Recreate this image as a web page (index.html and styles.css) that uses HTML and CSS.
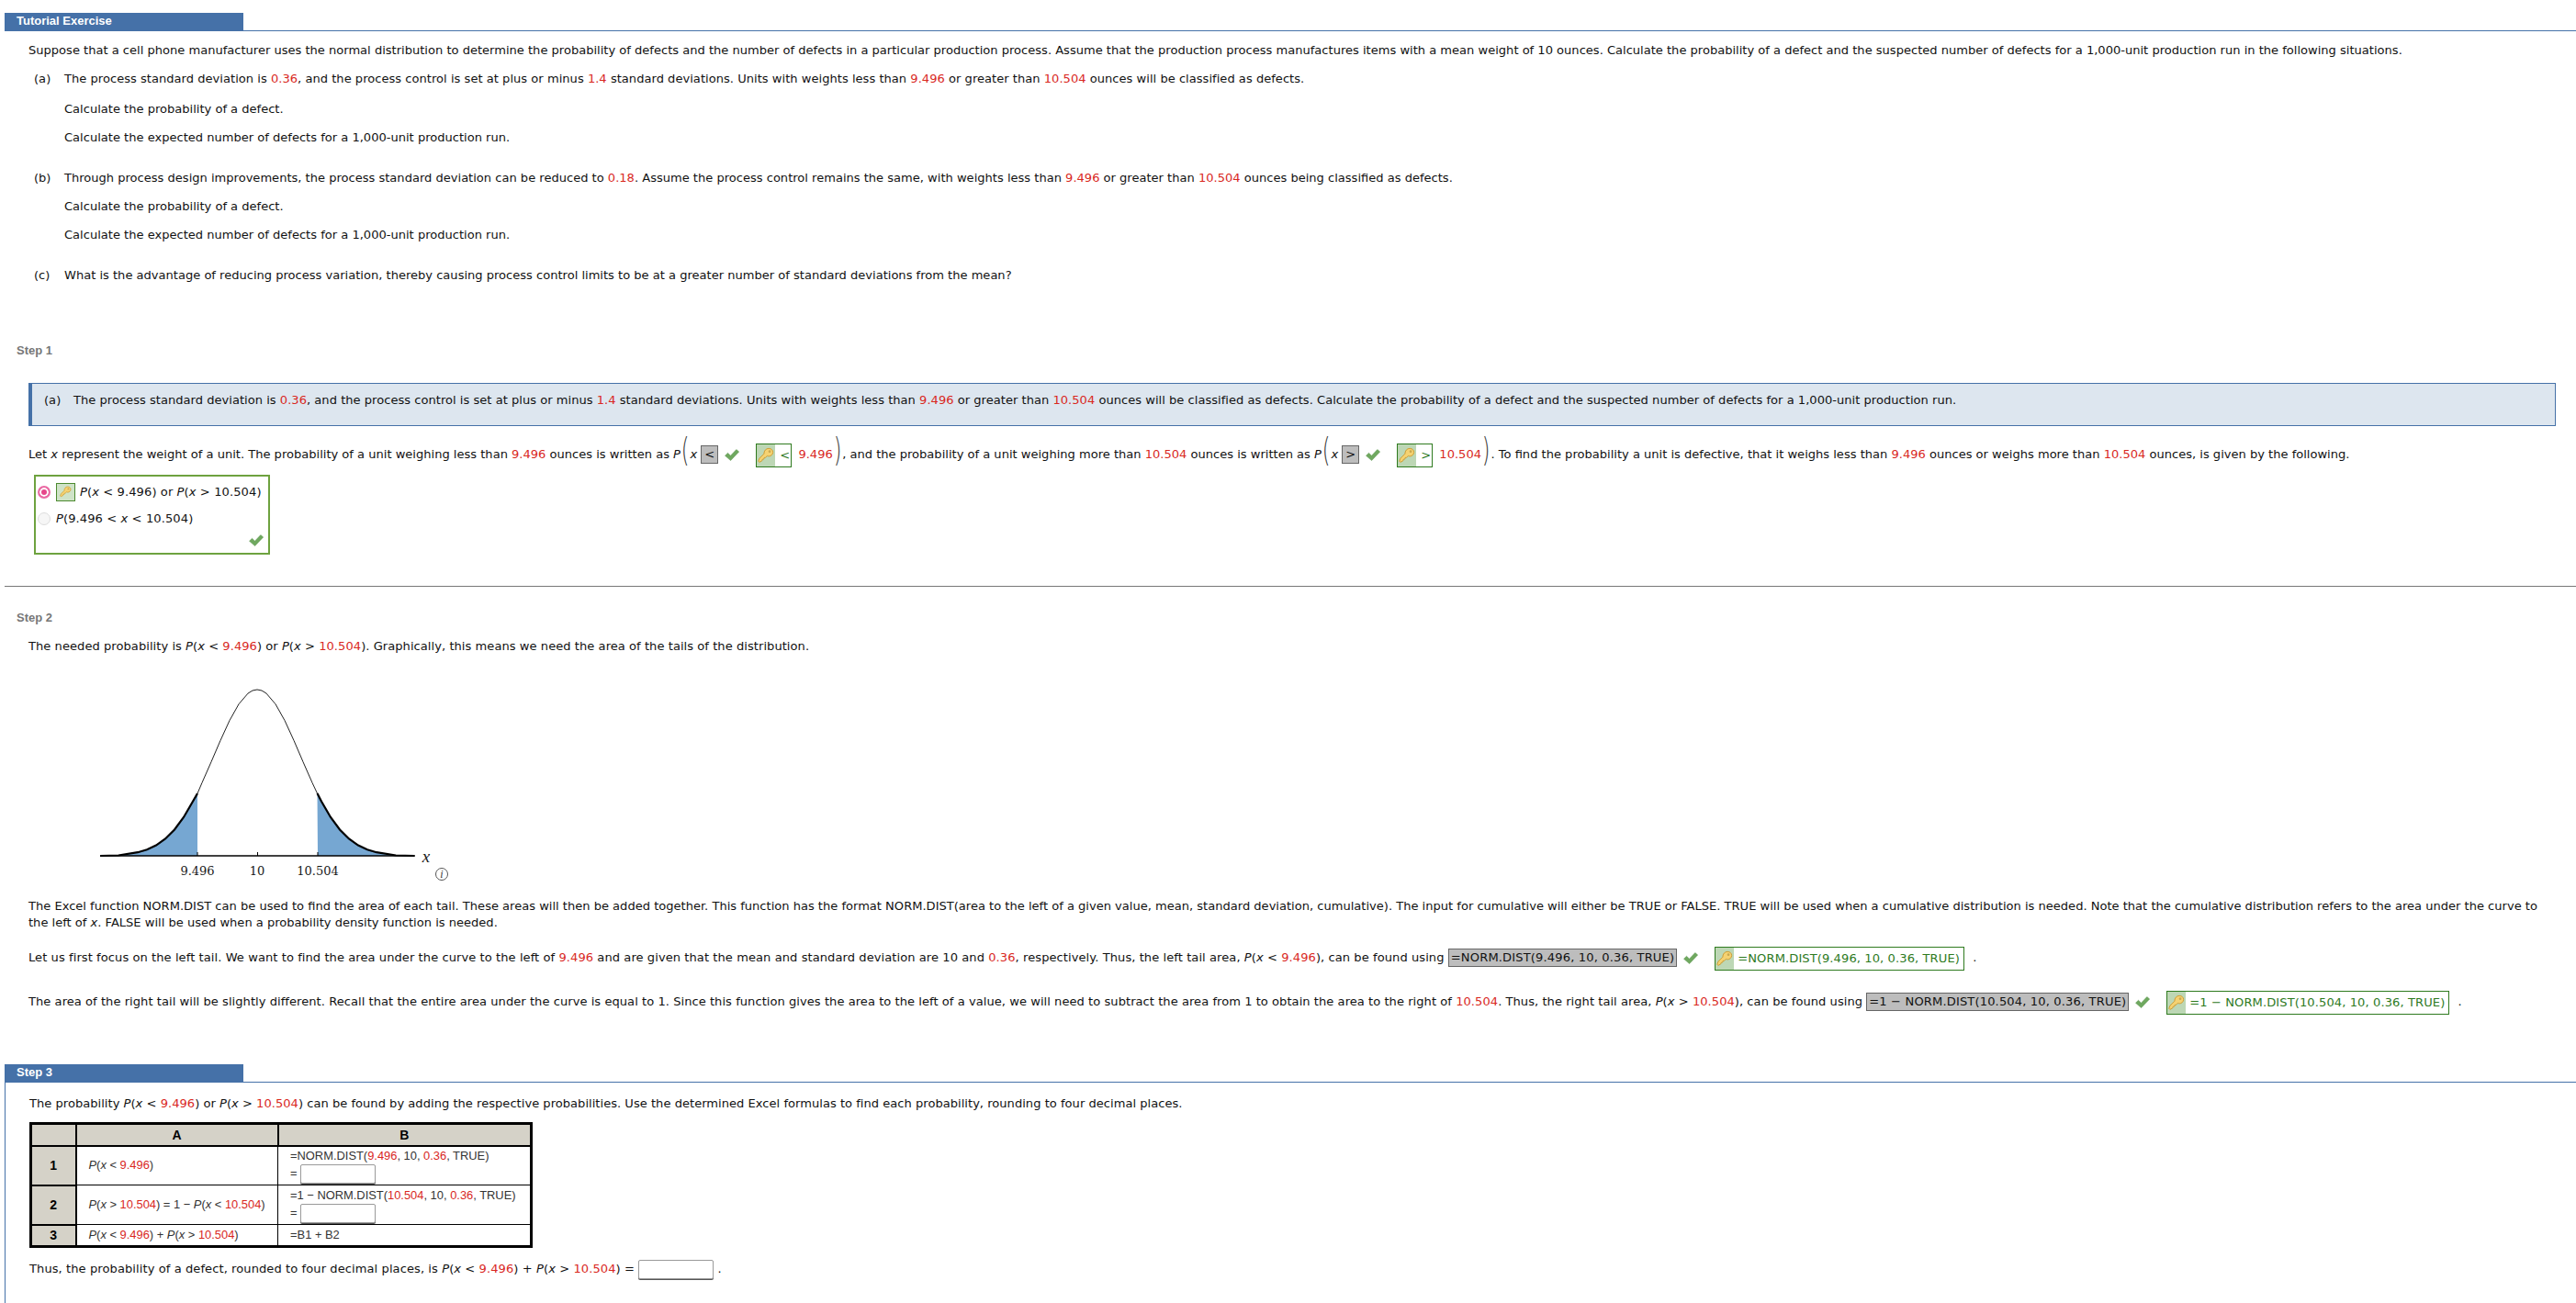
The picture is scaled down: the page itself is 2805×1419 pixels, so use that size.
FILE: index.html
```html
<!DOCTYPE html>
<html lang="en">
<head>
<meta charset="utf-8">
<title>Tutorial Exercise</title>
<link rel="stylesheet" href="styles.css">
</head>
<body>
<svg class="defs" width="0" height="0" aria-hidden="true">
  <symbol id="key" viewBox="0 0 20 20">
    <path d="M13.500 1.500c2.900 0 5 2.100 5 4.500 0 2.900-2.400 5-5 5-.8 0-1.500-.2-2-.4L9.500 12.500l-1.600.2-.4 1.800-1.800.3-.4 1.700-3.200 1.700-1.300-1.300 1.400-3.400 5.500-5.500C7.500 4.500 10 1.500 13.500 1.500z" fill="#f5d272" stroke="#c9982f" stroke-width="1"/>
    <circle cx="14.500" cy="5.200" r="1.500" fill="#c9a850"/>
  </symbol>
  <symbol id="check" viewBox="0 0 16 13">
    <path d="M.5 7.200L3.500 4.300l3 2.900L12.800.6l2.900 2.300L6.600 12.600z" fill="#6fa85f" stroke="#5c9650" stroke-width=".5"/>
  </symbol>
</svg>

<section class="head-block">
  <div class="tab-head"><span class="tab">Tutorial Exercise</span></div>
  <div class="body-copy">
    <p class="line first">Suppose that a cell phone manufacturer uses the normal distribution to determine the probability of defects and the number of defects in a particular production process. Assume that the production process manufactures items with a mean weight of 10 ounces. Calculate the probability of a defect and the suspected number of defects for a 1,000-unit production run in the following situations.</p>
    <div class="part gap-a wider"><span class="lab">(a)</span><span>The process standard deviation is <b class="r">0.36</b>, and the process control is set at plus or minus <b class="r">1.4</b> standard deviations. Units with weights less than <b class="r">9.496</b> or greater than <b class="r">10.504</b> ounces will be classified as defects.</span></div>
    <div class="part gap-c"><span class="lab"></span><span>Calculate the probability of a defect.</span></div>
    <div class="part gap-s"><span class="lab"></span><span>Calculate the expected number of defects for a 1,000-unit production run.</span></div>
    <div class="part gap-l"><span class="lab">(b)</span><span>Through process design improvements, the process standard deviation can be reduced to <b class="r">0.18</b>. Assume the process control remains the same, with weights less than <b class="r">9.496</b> or greater than <b class="r">10.504</b> ounces being classified as defects.</span></div>
    <div class="part gap-s"><span class="lab"></span><span>Calculate the probability of a defect.</span></div>
    <div class="part gap-s"><span class="lab"></span><span>Calculate the expected number of defects for a 1,000-unit production run.</span></div>
    <div class="part gap-l"><span class="lab">(c)</span><span>What is the advantage of reducing process variation, thereby causing process control limits to be at a greater number of standard deviations from the mean?</span></div>
  </div>
</section>

<section class="step-one">
  <h2 class="step-title">Step 1</h2>
  <div class="callout"><span class="lab">(a)</span><span>The process standard deviation is <b class="r">0.36</b>, and the process control is set at plus or minus <b class="r">1.4</b> standard deviations. Units with weights less than <b class="r">9.496</b> or greater than <b class="r">10.504</b> ounces will be classified as defects. Calculate the probability of a defect and the suspected number of defects for a 1,000-unit production run.</span></div>
  <p class="math-line">Let <i>x</i> represent the weight of a unit. The probability of a unit weighing less than <b class="r">9.496</b> ounces is written as <i>P</i><span class="paren">(</span><i>x</i> <span class="sel">&lt;</span><svg class="chk"><use href="#check"/></svg><span class="ans small"><span class="keybit"><svg class="key"><use href="#key"/></svg></span><span class="ans-txt">&lt;</span></span> <b class="r after-ans">9.496</b><span class="paren">)</span>, and the probability of a unit weighing more than <b class="r">10.504</b> ounces is written as <i>P</i><span class="paren">(</span><i>x</i> <span class="sel">&gt;</span><svg class="chk"><use href="#check"/></svg><span class="ans small"><span class="keybit"><svg class="key"><use href="#key"/></svg></span><span class="ans-txt">&gt;</span></span> <b class="r after-ans">10.504</b><span class="paren">)</span>. To find the probability a unit is defective, that it weighs less than <b class="r">9.496</b> ounces or weighs more than <b class="r">10.504</b> ounces, is given by the following.</p>
  <div class="choices">
    <div class="choice"><span class="radio on"></span><span class="keybox"><svg class="key tiny"><use href="#key"/></svg></span><span><i>P</i>(<i>x</i> &lt; 9.496) or <i>P</i>(<i>x</i> &gt; 10.504)</span></div>
    <div class="choice second"><span class="radio"></span><span><i>P</i>(9.496 &lt; <i>x</i> &lt; 10.504)</span></div>
    <svg class="chk corner"><use href="#check"/></svg>
  </div>
</section>

<hr class="rule">

<section class="step-two">
  <h2 class="step-title">Step 2</h2>
  <p class="line needed">The needed probability is <i>P</i>(<i>x</i> &lt; <b class="r">9.496</b>) or <i>P</i>(<i>x</i> &gt; <b class="r">10.504</b>). Graphically, this means we need the area of the tails of the distribution.</p>
  <svg class="graph" width="460" height="250" viewBox="0 0 460 250" role="img" aria-label="Normal curve with shaded tails">
    <polygon class="tail-fill" points="49,213 69,212.500 90,209.200 100,206.200 110,201.600 120,194.500 130,184.500 140,171 150,153.800 155,145.100 155,213"/>
    <polygon class="tail-fill" points="391,213 371,212.500 350,209.200 340,206.200 330,201.600 320,194.500 310,184.500 300,171 290,153.800 285.500,145.100 286,213"/>
    <polyline class="curve" points="155,145.100 160,133.400 170,110.700 180,87.400 190,65.600 200,47.800 210,36.100 215,33 220,32 225,33 230,36.100 240,47.800 250,65.600 260,87.400 270,110.700 280,133.400 285.500,145.100"/>
    <polyline class="curve-tail" points="49,213 69,212.500 90,209.200 100,206.200 110,201.600 120,194.500 130,184.500 140,171 150,153.800 155,145.100"/>
    <polyline class="curve-tail" points="391,213 371,212.500 350,209.200 340,206.200 330,201.600 320,194.500 310,184.500 300,171 290,153.800 285.500,145.100"/>
    <line class="axis" x1="49" y1="213" x2="392" y2="213"/>
    <line class="tick" x1="155" y1="209" x2="155" y2="213"/>
    <line class="tick" x1="220.500" y1="209" x2="220.500" y2="213"/>
    <line class="tick" x1="286" y1="209" x2="286" y2="213"/>
    <text class="glabel" x="155" y="234" text-anchor="middle">9.496</text>
    <text class="glabel" x="220" y="234" text-anchor="middle">10</text>
    <text class="glabel" x="286" y="234" text-anchor="middle">10.504</text>
    <text class="axis-x" x="404" y="220" text-anchor="middle">x</text>
    <circle class="info" cx="421" cy="233" r="6.500"/>
    <text class="info-i" x="421" y="237" text-anchor="middle">i</text>
  </svg>
  <p class="line">The Excel function NORM.DIST can be used to find the area of each tail. These areas will then be added together. This function has the format NORM.DIST(area to the left of a given value, mean, standard deviation, cumulative). The input for cumulative will either be TRUE or FALSE. TRUE will be used when a cumulative distribution is needed. Note that the cumulative distribution refers to the area under the curve to the left of <i>x</i>. FALSE will be used when a probability density function is needed.</p>
  <p class="formula-line gap-f1">Let us first focus on the left tail. We want to find the area under the curve to the left of <b class="r">9.496</b> and are given that the mean and standard deviation are 10 and <b class="r">0.36</b>, respectively. Thus, the left tail area, <i>P</i>(<i>x</i> &lt; <b class="r">9.496</b>), can be found using <span class="sel wide">=NORM.DIST(9.496, 10, 0.36, TRUE)</span><svg class="chk"><use href="#check"/></svg><span class="ans"><span class="keybit"><svg class="key"><use href="#key"/></svg></span><span class="ans-txt">=NORM.DIST(9.496, 10, 0.36, TRUE)</span></span> <span class="dot">.</span></p>
  <p class="formula-line gap-f2">The area of the right tail will be slightly different. Recall that the entire area under the curve is equal to 1. Since this function gives the area to the left of a value, we will need to subtract the area from 1 to obtain the area to the right of <b class="r">10.504</b>. Thus, the right tail area, <i>P</i>(<i>x</i> &gt; <b class="r">10.504</b>), can be found using <span class="sel wide">=1 − NORM.DIST(10.504, 10, 0.36, TRUE)</span><svg class="chk"><use href="#check"/></svg><span class="ans"><span class="keybit"><svg class="key"><use href="#key"/></svg></span><span class="ans-txt">=1 − NORM.DIST(10.504, 10, 0.36, TRUE)</span></span> <span class="dot">.</span></p>
</section>

<section class="step-three">
  <div class="tab-head"><span class="tab">Step 3</span></div>
  <div class="step-three-body">
    <p class="line wider">The probability <i>P</i>(<i>x</i> &lt; <b class="r">9.496</b>) or <i>P</i>(<i>x</i> &gt; <b class="r">10.504</b>) can be found by adding the respective probabilities. Use the determined Excel formulas to find each probability, rounding to four decimal places.</p>
    <table class="sheet">
      <colgroup><col class="c0"><col class="c1"><col class="c2"></colgroup>
      <thead><tr class="hrow"><th></th><th>A</th><th>B</th></tr></thead>
      <tbody>
        <tr class="row1"><th>1</th><td><i>P</i>(<i>x</i> &lt; <b class="r">9.496</b>)</td><td class="fcell">=NORM.DIST(<b class="r">9.496</b>, 10, <b class="r">0.36</b>, TRUE)<br>= <span class="blank cell-blank"></span></td></tr>
        <tr class="row1"><th>2</th><td><i>P</i>(<i>x</i> &gt; <b class="r">10.504</b>) = 1 − <i>P</i>(<i>x</i> &lt; <b class="r">10.504</b>)</td><td class="fcell">=1 − NORM.DIST(<b class="r">10.504</b>, 10, <b class="r">0.36</b>, TRUE)<br>= <span class="blank cell-blank"></span></td></tr>
        <tr class="row3"><th>3</th><td><i>P</i>(<i>x</i> &lt; <b class="r">9.496</b>) + <i>P</i>(<i>x</i> &gt; <b class="r">10.504</b>)</td><td>=B1 + B2</td></tr>
      </tbody>
    </table>
    <p class="thus">Thus, the probability of a defect, rounded to four decimal places, is <i>P</i>(<i>x</i> &lt; <b class="r">9.496</b>) + <i>P</i>(<i>x</i> &gt; <b class="r">10.504</b>) = <span class="blank"></span> .</p>
  </div>
</section>
</body>
</html>
```

FILE: styles.css
```css
* { box-sizing: border-box; }
html, body { margin: 0; padding: 0; height: 1419px; overflow: hidden; background: #fff; }
body { font: 13.06px/18px "DejaVu Sans", Verdana, sans-serif; color: #111; padding-top: 14px; }
p { margin: 0; }
.defs { position: absolute; }
.r { font-weight: normal; color: #d9281e; }
.wider { letter-spacing: .025px; }

.head-block, .step-one, .step-two { margin-left: 5px; }
.tab-head { height: 20px; border-bottom: 1px solid #4571a8; }
.tab { display: block; width: 260px; height: 20px; padding-left: 13px; background: #4571a8; color: #fff;
  font: bold 13px/18px "Liberation Sans", Arial, sans-serif; }
.body-copy { padding-left: 26px; }
.line { padding-right: 24px; }
.first { margin-top: 12px; }
.part { display: flex; height: 18px; padding-left: 6px; }
.lab { width: 33px; flex: none; }
.gap-a { margin-top: 13px; }
.gap-c { margin-top: 15px; }
.gap-s { margin-top: 13px; }
.gap-l { margin-top: 26px; }

.step-one { margin-top: 64px; }
.step-title { margin: 0 0 0 13px; height: 18px; font: bold 13px/18px "Liberation Sans", Arial, sans-serif; color: #777; }
.callout { display: flex; margin: 26px 22px 0 26px; height: 47px; padding: 9px 0 0 13px; background: #dde6ef; letter-spacing: .023px;
  border: 1px solid #4571a8; border-left-width: 4px; }
.callout .lab { width: 32px; }
.math-line { margin: 16px 0 0 26px; height: 30px; line-height: 30px; white-space: nowrap; }
.paren { display: inline-block; font: 200 36px/30px "DejaVu Sans", sans-serif; transform: scaleX(.62); vertical-align: middle; margin: -6px -1.800px 0; height: 36px; color: #333; }
.sel { display: inline-block; height: 20px; min-width: 15px; padding: 0 3px; line-height: 18px; background: #bdbdbd; border: 1px solid #666; vertical-align: middle; margin-top: -2px; text-align: center; }
.sel.wide { padding: 0 2px; letter-spacing: .15px; }
.chk { display: inline-block; width: 16px; height: 13px; vertical-align: middle; margin: 0 0 0 7px; }
.ans { display: inline-flex; height: 26px; margin-left: 18px; border: 1.5px solid #2e7a1e; vertical-align: middle; color: #2e7a1e; line-height: 23px; background: #fff; }
.ans.small { width: 39px; }
.keybit { width: 20px; flex: none; background: #bdd7b5; display: flex; align-items: center; justify-content: center; }
.ans-txt { padding: 0 4px; white-space: nowrap; letter-spacing: .1px; }
.ans.small .ans-txt { padding: 0 0 0 5px; }
.after-ans { margin-left: 3px; }
.key { width: 18px; height: 18px; }
.key.tiny { width: 13px; height: 13px; }

.choices { position: relative; width: 257px; height: 87px; margin: 7px 0 0 32px; border: 2px solid #6ea23f; letter-spacing: .1px; }
.choice { display: flex; align-items: center; height: 21px; margin-top: 6px; padding-left: 2px; }
.choice.second { margin-top: 8px; }
.radio { width: 14px; height: 14px; margin-right: 6px; border-radius: 50%; border: 1px solid #ddd; background: #f6f6f6; flex: none; }
.radio.on { border: 2px solid #ea6aa4; background: #e6478a; box-shadow: inset 0 0 0 2px #fff; }
.keybox { display: flex; align-items: center; justify-content: center; width: 21px; height: 20px; margin-right: 5px; background: #cfe3c8; border: 1px solid #4c8a30; flex: none; }
.chk.corner { position: absolute; right: 5px; bottom: 7px; margin: 0; }

.rule { margin: 34px 0 0 5px; border: 0; border-top: 1px solid #777; height: 0; }

.step-two { margin-top: 25px; padding-left: 26px; }
.step-two .step-title { margin-left: -13px; }
.needed { margin-top: 13px; letter-spacing: .05px; }
.graph { display: block; margin: 6px 0 9px 29px; }
.tail-fill { fill: #76a7d2; }
.curve { fill: none; stroke: #222; stroke-width: 1; }
.curve-tail { fill: none; stroke: #000; stroke-width: 2.2; }
.axis { stroke: #000; stroke-width: 1.6; }
.tick { stroke: #000; stroke-width: 1; }
.glabel { font: 13px "DejaVu Serif", serif; fill: #1a1a1a; }
.axis-x { font: italic 19px "Liberation Serif", serif; fill: #1a1a1a; }
.info { fill: #fff; stroke: #555; stroke-width: 1; }
.info-i { font: italic 12px "Liberation Serif", serif; fill: #333; }
.formula-line { height: 26px; line-height: 26px; white-space: nowrap; }
.gap-f1 { margin-top: 16px; letter-spacing: .07px; }
.gap-f2 { margin-top: 22px; letter-spacing: .048px; }
.dot { margin-left: 5px; }

.step-three { margin: 55px 0 0 5px; height: 300px; border-left: 1px solid #4571a8; }
.step-three .tab { width: 259px; padding-left: 12px; }
.step-three-body { padding: 14px 0 0 26px; }
.sheet { margin: 11px 0 0 0; width: 545px; border-collapse: collapse; table-layout: fixed; border: 3px solid #000;
  font: 12.9px/16px "Liberation Sans", Arial, sans-serif; color: #333; }
.c0 { width: 49px; } .c1 { width: 220px; } .c2 { width: 276px; }
.sheet th { background: #d5d2c8; border: 2px solid #000; color: #000; font-weight: bold; font-size: 14px; padding: 0; }
.sheet td { border: 1px solid #000; padding: 0 0 0 13px; }
.hrow { height: 24px; } .row1 { height: 43px; } .row3 { height: 24px; }
.fcell { line-height: 18px; }
.blank { display: inline-block; width: 82px; height: 21px; border: 1px solid #9a9a9a; border-radius: 2px; background: #fff; vertical-align: middle; box-shadow: 0 1px 0 #555; }
.thus { margin-top: 13px; height: 20px; line-height: 20px; white-space: nowrap; letter-spacing: .08px; }
```
